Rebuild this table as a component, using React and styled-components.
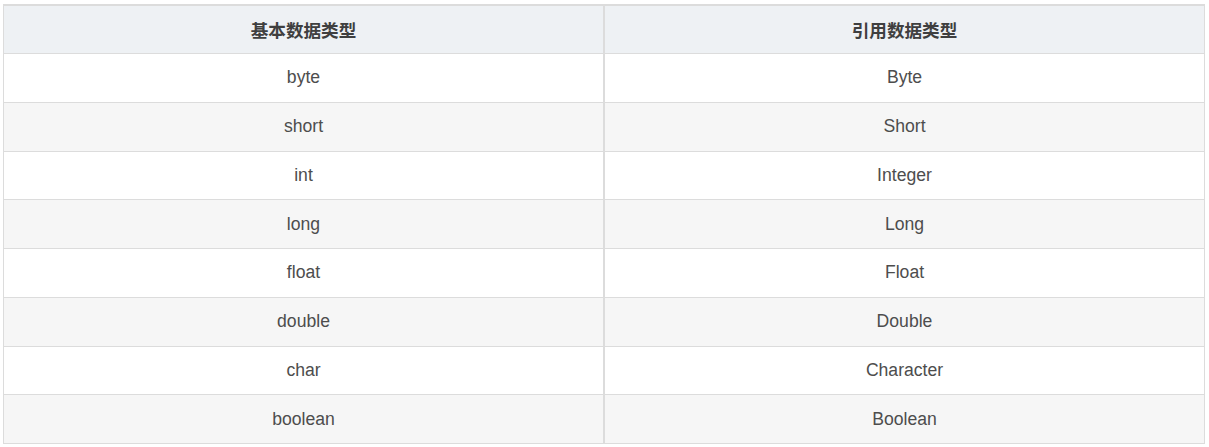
import React from 'react';
import styled, {createGlobalStyle} from 'styled-components';

const GlobalStyle = createGlobalStyle`
  body {
    margin: 0;
    background: #fff;
    font-family: "Liberation Sans", Arial, "Noto Sans CJK SC", sans-serif;
  }
`

const Wrapper = styled.div`
  padding: 4px 4px 0 3px;
`

const Table = styled.table`
  width: 1202px;
  border-collapse: collapse;
  table-layout: fixed;
  font-size: 17.6px;
  color: #4d4d4d;
  border: 1px solid #dcdcdc;
  border-top: 2px solid #dcdcdc;
`

const HeadCell = styled.th`
  height: 47px;
  padding: 0;
  background: #eef1f4;
  color: #3f3f3f;
  font-weight: bold;
  font-family: "Liberation Sans", "Noto Sans CJK SC", sans-serif;
  text-align: center;
  border-bottom: 1px solid #dcdcdc;
  & + & {
    border-left: 2px solid #dcdcdc;
  }
`

const Row = styled.tr`
  background: ${props => (props.$striped ? '#f6f6f6' : '#fff')};
`

const Cell = styled.td`
  height: 47.75px;
  padding: 0;
  text-align: center;
  border-bottom: 1px solid #dcdcdc;
  & + & {
    border-left: 2px solid #dcdcdc;
  }
`

const rows = [
  ['byte', 'Byte'],
  ['short', 'Short'],
  ['int', 'Integer'],
  ['long', 'Long'],
  ['float', 'Float'],
  ['double', 'Double'],
  ['char', 'Character'],
  ['boolean', 'Boolean'],
]

export default function App() {
  return (
    <Wrapper>
      <GlobalStyle/>
      <Table>
        <thead>
          <tr>
            <HeadCell>基本数据类型</HeadCell>
            <HeadCell>引用数据类型</HeadCell>
          </tr>
        </thead>
        <tbody>
          {rows.map(([basic, ref], i) => (
            <Row key={basic} $striped={i % 2 === 1}>
              <Cell>{basic}</Cell>
              <Cell>{ref}</Cell>
            </Row>
          ))}
        </tbody>
      </Table>
    </Wrapper>
  )
}
